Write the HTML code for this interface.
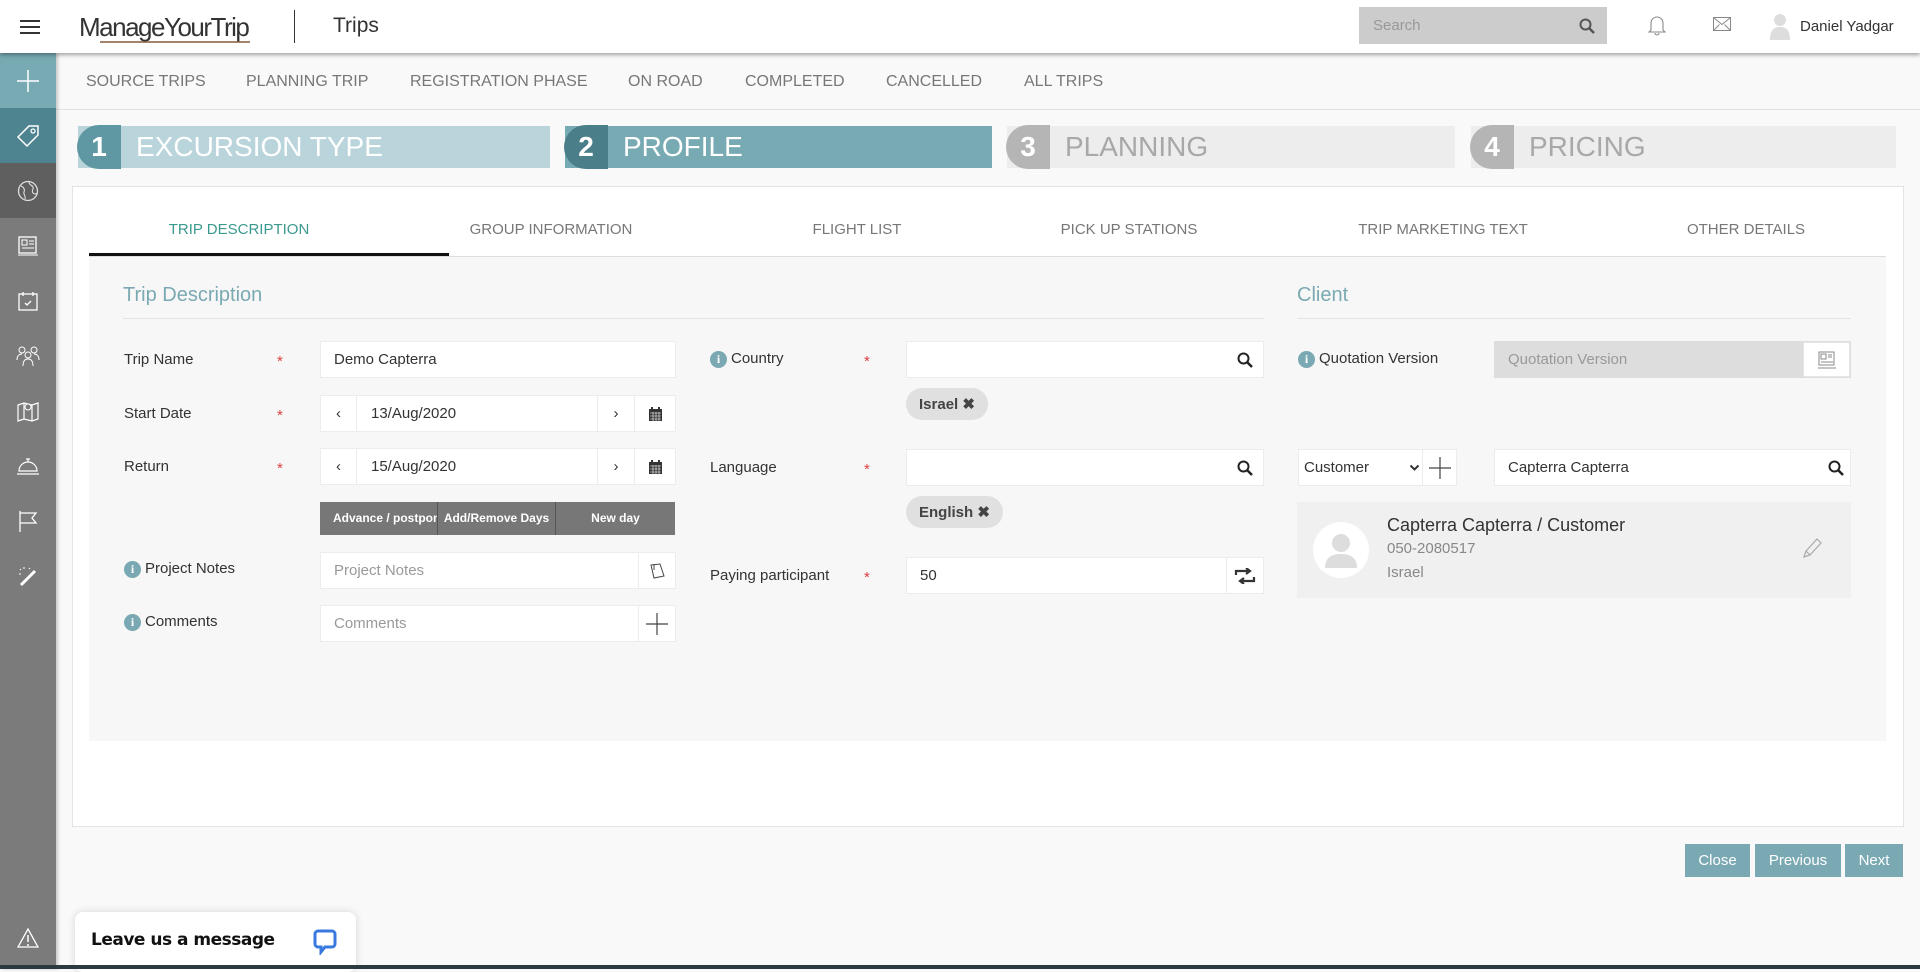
<!DOCTYPE html>
<html><head><meta charset="utf-8"><style>
*{box-sizing:border-box;margin:0;padding:0}
body{width:1920px;height:969px;overflow:hidden;background:#f9f9f9;font-family:"Liberation Sans",sans-serif;position:relative;color:#333}
.a{position:absolute}
.top{left:0;top:0;width:1920px;height:53px;background:#fff;box-shadow:0 2px 4px rgba(0,0,0,.35);z-index:5}
.side{left:0;top:53px;width:56px;height:916px;background:#7b7b7b;box-shadow:2px 0 3px rgba(0,0,0,.2);z-index:4}
.si{position:absolute;left:0;width:56px;height:55px;display:flex;align-items:center;justify-content:center}
.sub{font-size:16px;color:#777;top:73px}
.step{top:126px;height:42px;display:flex;align-items:center;font-size:28px}
.step .n{width:44px;height:44px;border-radius:22px 0 0 22px;display:flex;align-items:center;justify-content:center;font-weight:bold;color:#fff;font-size:28px;margin-left:-1px}
.step .t{padding-left:15px}
.tab{top:221px;font-size:15px;color:#777;transform:translateX(-50%);white-space:nowrap}
.lbl{font-size:15px;color:#333}
.ast{color:#e04040;font-size:15px}
.inp{background:#fff;border:1px solid #ececec;height:37px;font-size:15px;display:flex;align-items:center;padding-left:13px}
.ph{color:#999}
.ib{position:absolute;top:0;height:35px;display:flex;align-items:center;justify-content:center;border-left:1px solid #ececec;background:#fff}
.info{display:inline-block;width:17px;height:17px;border-radius:50%;background:#7aa9b3;color:#fff;font-size:12px;font-weight:bold;text-align:center;line-height:17px;font-family:"Liberation Serif",serif;vertical-align:-1px;margin-right:4px;position:relative;top:-1px}
.chip{height:32px;border-radius:16px;background:#e0e0e0;font-weight:bold;font-size:15px;color:#444;display:flex;align-items:center;padding:0 13px}
.btn{background:#7aa9b3;color:#fff;font-size:15px;display:flex;align-items:center;justify-content:center;top:844px;height:33px}
</style></head><body>
<div class="a top">
  <svg class="a" style="left:20px;top:19px" width="20" height="16"><path d="M0 2h20M0 8h20M0 14h20" stroke="#333" stroke-width="2"/></svg>
  <div class="a" style="left:79px;top:12px;font-size:26px;color:#333;letter-spacing:-1.5px">Manage<span>Y</span>our<span>T</span>rip</div>
  <svg class="a" style="left:100px;top:38px" width="150" height="6"><path d="M0 4h150" stroke="#8a5a3a" stroke-width="1.5"/></svg>
  <div class="a" style="left:294px;top:10px;width:1px;height:33px;background:#333"></div>
  <div class="a" style="left:333px;top:14px;font-size:21px;color:#333">Trips</div>
  <div class="a" style="left:1359px;top:7px;width:248px;height:37px;background:#ccc"><span class="a" style="left:14px;top:10px;font-size:15px;color:#999">Search</span>
    <svg class="a" style="left:220px;top:11px" width="16" height="16"><circle cx="6.5" cy="6.5" r="5" fill="none" stroke="#555" stroke-width="2"/><path d="M10 10l5 5" stroke="#555" stroke-width="2.5"/></svg></div>
  <svg class="a" style="left:1648px;top:14px" width="18" height="22"><path d="M3 16V9a6 6 0 0 1 12 0v7l2 2H1z M7 19a2 2 0 0 0 4 0" fill="none" stroke="#888" stroke-width="1.1"/></svg>
  <svg class="a" style="left:1713px;top:17px" width="18" height="14"><rect x=".5" y=".5" width="17" height="13" fill="none" stroke="#888"/><path d="M.5 .5l8.5 7 8.5-7M.5 13.5l6-6M17.5 13.5l-6-6" fill="none" stroke="#888"/></svg>
  <svg class="a" style="left:1768px;top:12px" width="24" height="28"><circle cx="12" cy="8" r="6" fill="#ddd"/><path d="M2 28c0-10 4-13 10-13s10 3 10 13z" fill="#ddd"/></svg>
  <div class="a" style="left:1800px;top:18px;font-size:15px;color:#333">Daniel Yadgar</div>
</div>
<div class="a side">
  <div class="si" style="top:0;background:#78aab4"><svg width="24" height="24"><path d="M12 1v22M1 12h22" stroke="#fff" stroke-width="1.5"/></svg></div>
  <div class="si" style="top:55px;background:#4e848f"><svg width="24" height="24"><path d="M13 2h9v9L11 22 2 13z" fill="none" stroke="#fff" stroke-width="1.5"/><circle cx="17" cy="7" r="2" fill="none" stroke="#fff" stroke-width="1.3"/></svg></div>
  <div class="si" style="top:110px;background:#5f5f5f"><svg width="22" height="22"><circle cx="11" cy="11" r="9.5" fill="none" stroke="#ddd" stroke-width="1.3"/><path d="M4 6c3 1 4 4 3 6s2 4 1 7M12 2c0 3 3 3 4 5s-2 4 0 6 3 0 4 1" fill="none" stroke="#ddd" stroke-width="1.1"/></svg></div>
  <div class="si" style="top:165px"><svg width="22" height="22"><rect x="2" y="2" width="17" height="16" fill="none" stroke="#fff" stroke-width="1.3"/><rect x="5" y="5" width="5" height="5" fill="none" stroke="#fff"/><path d="M12 6h5M12 9h5M5 13h12M1 20h20" stroke="#fff"/></svg></div>
  <div class="si" style="top:220px"><svg width="22" height="22"><rect x="2" y="4" width="18" height="16" fill="none" stroke="#fff" stroke-width="1.3"/><path d="M6 2v4M16 2v4M8 13l2 2 4-4" fill="none" stroke="#fff" stroke-width="1.3"/></svg></div>
  <div class="si" style="top:275px"><svg width="24" height="22"><circle cx="6" cy="5" r="3" fill="none" stroke="#fff"/><circle cx="18" cy="5" r="3" fill="none" stroke="#fff"/><circle cx="12" cy="10" r="3" fill="none" stroke="#fff"/><path d="M1 15c0-5 3-6 5-6M23 15c0-5-3-6-5-6M7 21c0-5 2-7 5-7s5 2 5 7" fill="none" stroke="#fff"/></svg></div>
  <div class="si" style="top:330px"><svg width="24" height="22"><path d="M2 5l6-2 8 2 6-2v16l-6 2-8-2-6 2zM8 3v16M16 5v16" fill="none" stroke="#fff" stroke-width="1.2"/><circle cx="12" cy="7" r="3" fill="#7b7b7b" stroke="#fff"/></svg></div>
  <div class="si" style="top:385px"><svg width="24" height="20"><path d="M3 15a9 9 0 0 1 18 0zM1 18h22M12 3v3M10 3h4" fill="none" stroke="#fff" stroke-width="1.2"/></svg></div>
  <div class="si" style="top:440px"><svg width="22" height="22"><path d="M3 1v21M3 3h16l-4 5 4 5H3" fill="none" stroke="#fff" stroke-width="1.3"/></svg></div>
  <div class="si" style="top:495px"><svg width="22" height="22"><path d="M4 20L18 6" stroke="#fff" stroke-width="3"/><path d="M3 4l1 1M7 2v2M2 9h2M12 3l1 1" stroke="#fff"/></svg></div>
  <div class="si" style="top:857px"><svg width="22" height="20"><path d="M11 1L21 19H1z" fill="none" stroke="#fff" stroke-width="1.3"/><path d="M11 7v7M11 16v2" stroke="#fff" stroke-width="1.5"/></svg></div>
</div>
<div class="a" style="left:56px;top:109px;width:1864px;height:1px;background:#e2e2e2"></div>
<span class="a sub" style="left:86px">SOURCE TRIPS</span>
<span class="a sub" style="left:246px">PLANNING TRIP</span>
<span class="a sub" style="left:410px">REGISTRATION PHASE</span>
<span class="a sub" style="left:628px">ON ROAD</span>
<span class="a sub" style="left:745px">COMPLETED</span>
<span class="a sub" style="left:886px">CANCELLED</span>
<span class="a sub" style="left:1024px">ALL TRIPS</span>

<div class="a step" style="left:78px;width:472px;background:#b9d5db;color:#fff"><div class="n" style="background:#5f97a3">1</div><div class="t">EXCURSION TYPE</div></div>
<div class="a step" style="left:565px;width:427px;background:#78aab4;color:#fff"><div class="n" style="background:#4a7f8a">2</div><div class="t">PROFILE</div></div>
<div class="a step" style="left:1007px;width:448px;background:#ededed;color:#a8a8a8"><div class="n" style="background:#b5b5b5">3</div><div class="t">PLANNING</div></div>
<div class="a step" style="left:1471px;width:425px;background:#ededed;color:#a8a8a8"><div class="n" style="background:#b5b5b5">4</div><div class="t">PRICING</div></div>

<div class="a" style="left:72px;top:186px;width:1832px;height:641px;background:#fff;border:1px solid #e3e3e3"></div>
<span class="a tab" style="left:239px;color:#3a9a8e">TRIP DESCRIPTION</span>
<span class="a tab" style="left:551px">GROUP INFORMATION</span>
<span class="a tab" style="left:857px">FLIGHT LIST</span>
<span class="a tab" style="left:1129px">PICK UP STATIONS</span>
<span class="a tab" style="left:1443px">TRIP MARKETING TEXT</span>
<span class="a tab" style="left:1746px">OTHER DETAILS</span>
<div class="a" style="left:89px;top:256px;width:1797px;height:1px;background:#ddd"></div>
<div class="a" style="left:89px;top:253px;width:360px;height:3px;background:#111"></div>
<div class="a" style="left:89px;top:257px;width:1797px;height:484px;background:#f7f7f7"></div>

<div class="a" style="left:123px;top:284px;font-size:20px;color:#7aa9b3">Trip Description</div>
<div class="a" style="left:123px;top:318px;width:1141px;height:1px;background:#e3e3e3"></div>
<div class="a" style="left:1297px;top:284px;font-size:20px;color:#7aa9b3">Client</div>
<div class="a" style="left:1297px;top:318px;width:554px;height:1px;background:#e3e3e3"></div>

<span class="a lbl" style="left:124px;top:351px">Trip Name</span><span class="a ast" style="left:277px;top:353px">*</span>
<div class="a inp" style="left:320px;top:341px;width:356px">Demo Capterra</div>
<span class="a lbl" style="left:124px;top:405px">Start Date</span><span class="a ast" style="left:277px;top:407px">*</span>
<span class="a lbl" style="left:124px;top:458px">Return</span><span class="a ast" style="left:277px;top:460px">*</span>
<div class="a inp" style="left:320px;top:395px;width:356px;padding:0"><div class="ib" style="left:0;width:36px;border:0;border-right:1px solid #ececec">‹</div><span class="a" style="left:50px;top:9px">13/Aug/2020</span><div class="ib" style="left:276px;width:37px">›</div><div class="ib" style="left:313px;width:41px"><svg width="13" height="14"><rect x="0" y="2" width="13" height="12" fill="#333"/><path d="M3 0v3M10 0v3" stroke="#333" stroke-width="2"/><path d="M1 6h11M1 9h11M1 12h11M4 5v9M7 5v9M10 5v9" stroke="#fff" stroke-width=".6"/></svg></div></div>
<div class="a inp" style="left:320px;top:448px;width:356px;padding:0"><div class="ib" style="left:0;width:36px;border:0;border-right:1px solid #ececec">‹</div><span class="a" style="left:50px;top:9px">15/Aug/2020</span><div class="ib" style="left:276px;width:37px">›</div><div class="ib" style="left:313px;width:41px"><svg width="13" height="14"><rect x="0" y="2" width="13" height="12" fill="#333"/><path d="M3 0v3M10 0v3" stroke="#333" stroke-width="2"/><path d="M1 6h11M1 9h11M1 12h11M4 5v9M7 5v9M10 5v9" stroke="#fff" stroke-width=".6"/></svg></div></div>
<div class="a" style="left:320px;top:502px;width:355px;height:33px;background:#777;display:flex;color:#fff;font-size:12px;font-weight:bold">
 <div style="width:118px;overflow:hidden;white-space:nowrap;padding-left:13px;line-height:33px;border-right:1px solid #555">Advance / postpone</div>
 <div style="width:118px;text-align:center;line-height:33px;border-right:1px solid #555;white-space:nowrap;overflow:hidden">Add/Remove Days</div>
 <div style="flex:1;text-align:center;line-height:33px">New day</div></div>
<span class="a lbl" style="left:124px;top:560px"><span class="info">i</span>Project Notes</span>
<div class="a inp ph" style="left:320px;top:552px;width:356px">Project Notes<div class="ib" style="left:317px;width:37px"><svg width="18" height="18"><path d="M3 3l9-1 4 12-10 2z" fill="none" stroke="#444"/><path d="M6 2v6" stroke="#444"/></svg></div></div>
<span class="a lbl" style="left:124px;top:613px"><span class="info">i</span>Comments</span>
<div class="a inp ph" style="left:320px;top:605px;width:356px">Comments<div class="ib" style="left:317px;width:37px"><svg width="22" height="22"><path d="M11 0v22M0 11h22" stroke="#444" stroke-width="1.2"/></svg></div></div>

<span class="a lbl" style="left:710px;top:350px"><span class="info">i</span>Country</span><span class="a ast" style="left:864px;top:353px">*</span>
<div class="a inp" style="left:906px;top:341px;width:358px"><svg class="a" style="left:330px;top:10px" width="16" height="16"><circle cx="6.5" cy="6.5" r="5" fill="none" stroke="#222" stroke-width="2"/><path d="M10 10l5 5" stroke="#222" stroke-width="2.5"/></svg></div>
<div class="a chip" style="left:906px;top:388px">Israel&nbsp;✖</div>
<span class="a lbl" style="left:710px;top:459px">Language</span><span class="a ast" style="left:864px;top:461px">*</span>
<div class="a inp" style="left:906px;top:449px;width:358px"><svg class="a" style="left:330px;top:10px" width="16" height="16"><circle cx="6.5" cy="6.5" r="5" fill="none" stroke="#222" stroke-width="2"/><path d="M10 10l5 5" stroke="#222" stroke-width="2.5"/></svg></div>
<div class="a chip" style="left:906px;top:496px">English&nbsp;✖</div>
<span class="a lbl" style="left:710px;top:567px">Paying participant</span><span class="a ast" style="left:864px;top:569px">*</span>
<div class="a inp" style="left:906px;top:557px;width:358px">50<div class="ib" style="left:319px;width:37px"><svg width="22" height="16"><path d="M2 7V3h13M12 0l4 3-4 3M20 9v4H7M10 10l-4 3 4 3" fill="none" stroke="#333" stroke-width="2.2"/></svg></div></div>

<span class="a lbl" style="left:1298px;top:350px"><span class="info">i</span>Quotation Version</span>
<div class="a inp ph" style="left:1494px;top:341px;width:357px;background:#ddd;border-color:#ddd">Quotation Version<div class="ib" style="left:308px;width:47px;border:1px solid #e5e5e5"><svg width="18" height="18"><rect x="1" y="1" width="15" height="13" fill="none" stroke="#888"/><rect x="3" y="3" width="5" height="5" fill="none" stroke="#888"/><path d="M10 4h4M10 6h4M3 11h12M0 17h18" stroke="#888"/></svg></div></div>
<div class="a inp" style="left:1298px;top:449px;width:159px;padding-left:5px">Customer<div class="ib" style="left:123px;width:34px"><svg width="22" height="22"><path d="M11 0v22M0 11h22" stroke="#444" stroke-width="1.2"/></svg></div><svg class="a" style="left:110px;top:14px;z-index:2" width="11" height="8"><path d="M1.5 1.5l4 4 4-4" fill="none" stroke="#333" stroke-width="2"/></svg></div>
<div class="a inp" style="left:1494px;top:449px;width:357px">Capterra Capterra<svg class="a" style="left:333px;top:10px" width="16" height="16"><circle cx="6.5" cy="6.5" r="5" fill="none" stroke="#222" stroke-width="2"/><path d="M10 10l5 5" stroke="#222" stroke-width="2.5"/></svg></div>
<div class="a" style="left:1297px;top:502px;width:554px;height:96px;background:#f0f0f0"></div>
<svg class="a" style="left:1313px;top:522px" width="56" height="56"><circle cx="28" cy="28" r="28" fill="#fff"/><circle cx="28" cy="21" r="9" fill="#ddd"/><path d="M12 46c0-10 6-14 16-14s16 4 16 14z" fill="#ddd"/></svg>
<div class="a" style="left:1387px;top:515px;font-size:18px;color:#333">Capterra Capterra / Customer</div>
<div class="a" style="left:1387px;top:540px;font-size:15px;color:#888">050-2080517</div>
<div class="a" style="left:1387px;top:564px;font-size:15px;color:#888">Israel</div>
<svg class="a" style="left:1802px;top:537px" width="20" height="22"><path d="M2 20l2-6L15 2l4 4L8 18zM4 14l4 4" fill="none" stroke="#aaa" stroke-width="1.2"/></svg>

<div class="a btn" style="left:1685px;width:65px">Close</div>
<div class="a btn" style="left:1755px;width:86px">Previous</div>
<div class="a btn" style="left:1845px;width:58px">Next</div>

<div class="a" style="left:75px;top:912px;width:281px;height:60px;background:#fff;border-radius:8px;box-shadow:0 0 8px rgba(0,0,0,.15)">
 <span class="a" style="left:16px;top:18px;font-size:17px;font-weight:bold;color:#111;font-family:'DejaVu Sans',sans-serif;letter-spacing:-.5px">Leave us a message</span>
 <svg class="a" style="left:238px;top:17px" width="24" height="26"><path d="M5 2h14a3 3 0 0 1 3 3v10a3 3 0 0 1-3 3h-7l-4 5v-5H5a3 3 0 0 1-3-3V5a3 3 0 0 1 3-3z" fill="none" stroke="#3a7ae0" stroke-width="3"/></svg>
</div>
<div class="a" style="left:0;top:965px;width:1920px;height:4px;background:#2b3a40;z-index:6"></div>
</body></html>
